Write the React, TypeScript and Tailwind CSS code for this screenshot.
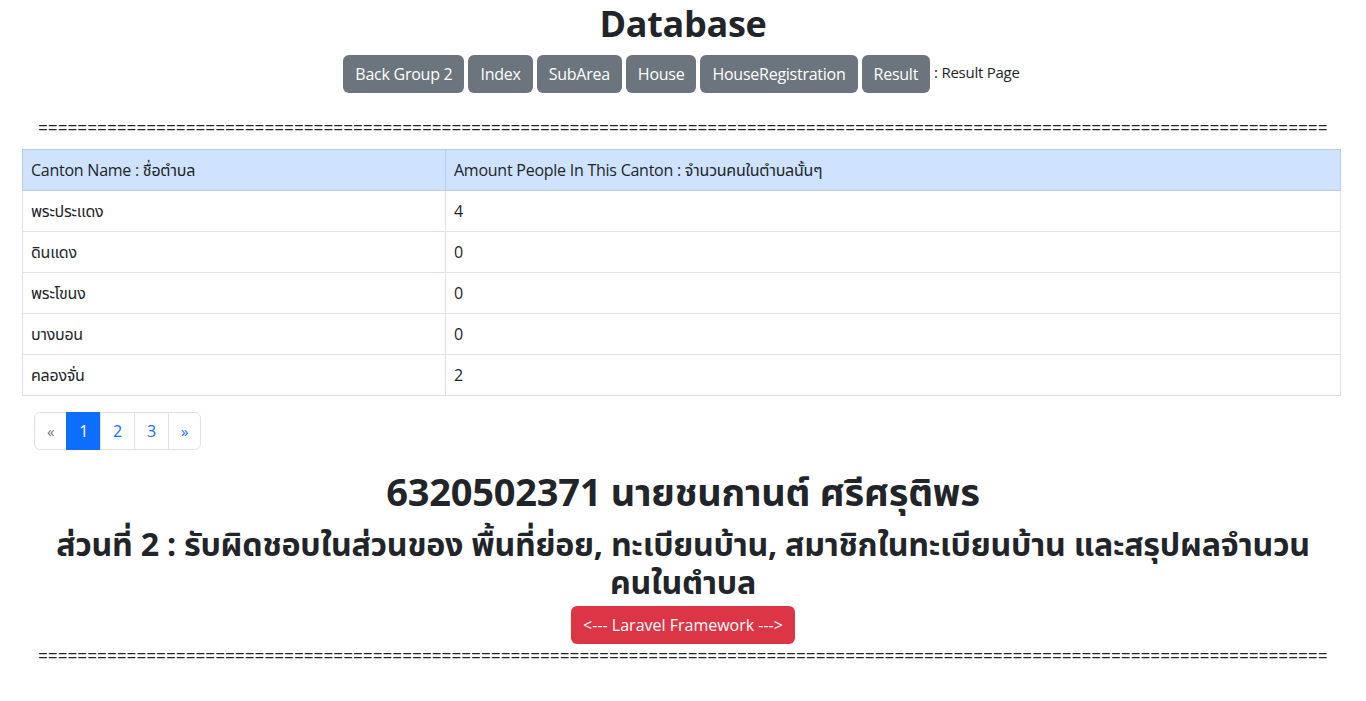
import React from "react";

const EQ = "=".repeat(131);

const navButtons = ["Back Group 2", "Index", "SubArea", "House", "HouseRegistration", "Result"];

const rows: [string, string][] = [
  ["พระประแดง", "4"],
  ["ดินแดง", "0"],
  ["พระโขนง", "0"],
  ["บางบอน", "0"],
  ["คลองจั่น", "2"],
];

export default function App() {
  return (
    <div className="min-h-[701px] bg-white text-[#212529] font-['Open_Sans','Noto_Sans_Thai','Leelawadee_UI','Noto_Sans',sans-serif] tracking-[-0.25px]">
      <h1 className="m-0 h-[48px] text-center text-[36px] font-bold leading-[48px] tracking-[-0.3px]">Database</h1>

      <div className="mt-[7px] flex items-baseline justify-center gap-[4px] pr-[3px]">
        {navButtons.map((b) => (
          <button
            key={b}
            className="h-[38px] rounded-[6px] bg-[#6c757d] px-[12px] text-[16px] leading-[24px] text-white"
          >
            {b}
          </button>
        ))}
        <span className="relative top-[-2px] text-[15px] leading-[24px]">: Result Page</span>
      </div>

      <div className="mt-[23px] text-center font-['Liberation_Sans',sans-serif] text-[16px] leading-[24px] tracking-[0.5px] whitespace-nowrap">
        {EQ}
      </div>

      <div className="ml-[22px] mt-[9px] w-[1319px]">
        <table className="w-full border-collapse text-[16px] leading-[24px]">
          <thead>
            <tr className="bg-[#cfe2ff]">
              <th className="w-[423px] border border-[#bacbe6] px-[8px] py-[8px] text-left font-normal">
                Canton Name : ชื่อตำบล
              </th>
              <th className="border border-[#bacbe6] px-[8px] py-[8px] text-left font-normal">
                Amount People In This Canton : จำนวนคนในตำบลนั้นๆ
              </th>
            </tr>
          </thead>
          <tbody>
            {rows.map(([name, n]) => (
              <tr key={name}>
                <td className="border border-[#dee2e6] px-[8px] py-[8px]">{name}</td>
                <td className="border border-[#dee2e6] px-[8px] py-[8px]">{n}</td>
              </tr>
            ))}
          </tbody>
        </table>

        <nav className="mt-[16px] ml-[12px] flex">
          <span className="flex h-[38px] items-center rounded-l-[6px] border border-[#dee2e6] px-[12px] text-[15px] text-[#6c757d]">
            «
          </span>
          <span className="ml-[-1px] flex h-[38px] items-center border border-[#0d6efd] bg-[#0d6efd] px-[12px] text-[16px] text-white">
            1
          </span>
          <span className="ml-[-1px] flex h-[38px] items-center border border-[#dee2e6] px-[12px] text-[16px] text-[#0d6efd]">
            2
          </span>
          <span className="ml-[-1px] flex h-[38px] items-center border border-[#dee2e6] px-[12px] text-[16px] text-[#0d6efd]">
            3
          </span>
          <span className="ml-[-1px] flex h-[38px] items-center rounded-r-[6px] border border-[#dee2e6] px-[12px] text-[15px] text-[#0d6efd]">
            »
          </span>
        </nav>
      </div>

      <h2 className="mt-[20px] text-center text-[38px] font-bold leading-[43px]">
        6320502371 นายชนกานต์ ศรีศรุติพร
      </h2>
      <h3 className="mt-[12px] text-center text-[32.2px] font-bold leading-[38px]">
        ส่วนที่ 2 : รับผิดชอบในส่วนของ พื้นที่ย่อย, ทะเบียนบ้าน, สมาชิกในทะเบียนบ้าน และสรุปผลจำนวน
        <br />
        คนในตำบล
      </h3>

      <div className="mt-[5px] flex justify-center">
        <button className="h-[38px] rounded-[6px] bg-[#dc3545] px-[12px] text-[16px] leading-[24px] tracking-normal text-white">
          {"<--- Laravel Framework --->"}
        </button>
      </div>

      <div className="text-center font-['Liberation_Sans',sans-serif] text-[16px] leading-[24px] tracking-[0.5px] whitespace-nowrap">
        {EQ}
      </div>
    </div>
  );
}
